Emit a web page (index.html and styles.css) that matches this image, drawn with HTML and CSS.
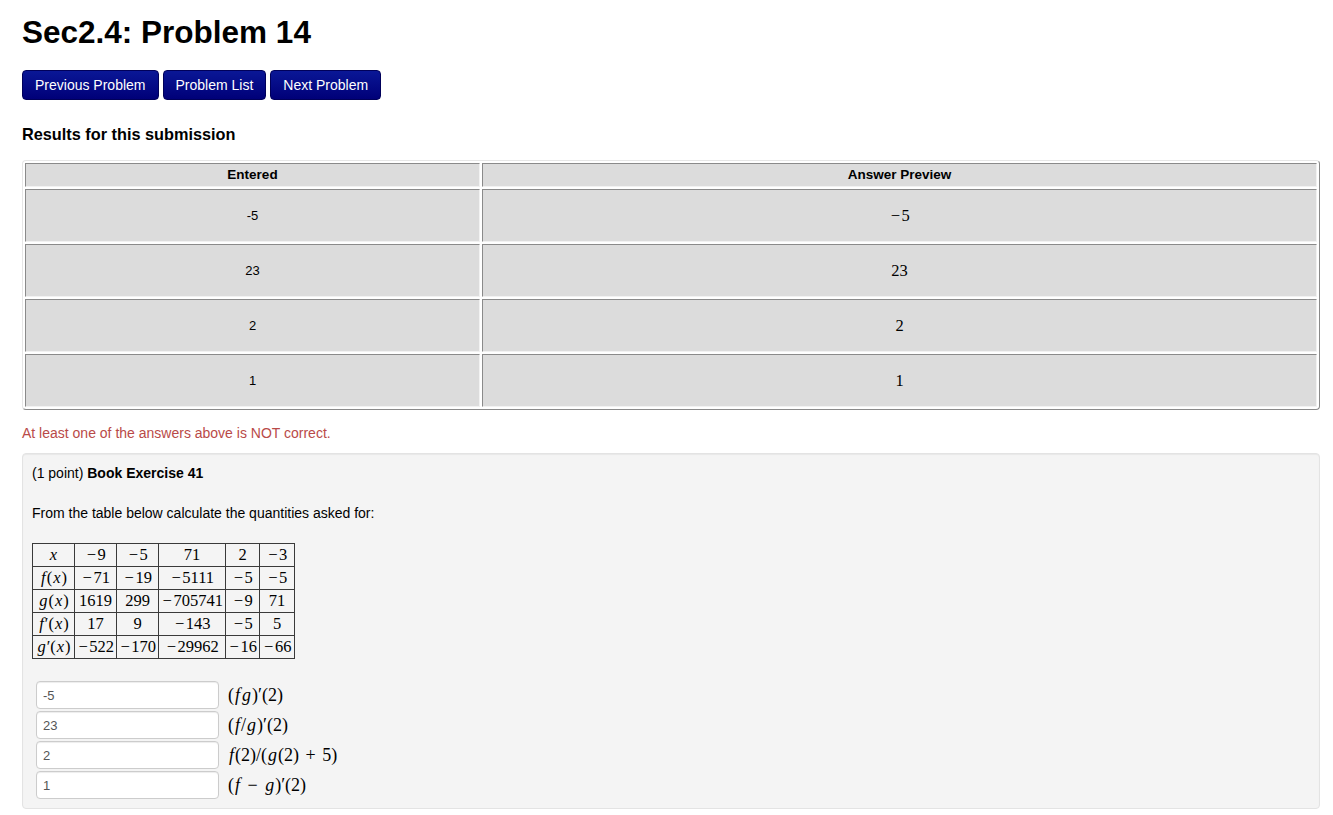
FILE: index.html
```html
<!DOCTYPE html>
<html>
<head>
<meta charset="utf-8">
<title>Sec2.4: Problem 14</title>
<link rel="stylesheet" href="styles.css">
</head>
<body>
<div class="page">
  <h2 class="title">Sec2.4: Problem 14</h2>
  <div class="nav">
    <a class="btn">Previous Problem</a>
    <a class="btn">Problem List</a>
    <a class="btn">Next Problem</a>
  </div>
  <h3 class="results-head">Results for this submission</h3>
  <table class="attempt">
    <colgroup><col class="c1"><col></colgroup>
    <tr class="hdr"><th>Entered</th><th>Answer Preview</th></tr>
    <tr><td>-5</td><td class="math"><span class="mn">−</span>5</td></tr>
    <tr><td>23</td><td class="math">23</td></tr>
    <tr><td>2</td><td class="math">2</td></tr>
    <tr><td>1</td><td class="math">1</td></tr>
  </table>
  <div class="msg">At least one of the answers above is NOT correct.</div>
  <div class="well">
    <p class="line">(1 point) <b>Book Exercise 41</b></p>
    <p class="line spaced">From the table below calculate the quantities asked for:</p>
    <table class="data">
      <colgroup><col class="d1"><col class="d2"><col class="d3"><col class="d4"><col class="d5"><col class="d6"></colgroup>
      <tr><td><i class="v">x</i></td><td><span class="mn">−</span>9</td><td><span class="mn">−</span>5</td><td>71</td><td>2</td><td><span class="mn">−</span>3</td></tr>
      <tr><td><i class="v">f</i>(<i class="v">x</i>)</td><td><span class="mn">−</span>71</td><td><span class="mn">−</span>19</td><td><span class="mn">−</span>5111</td><td><span class="mn">−</span>5</td><td><span class="mn">−</span>5</td></tr>
      <tr><td><i class="v">g</i>(<i class="v">x</i>)</td><td>1619</td><td>299</td><td><span class="mn">−</span>705741</td><td><span class="mn">−</span>9</td><td>71</td></tr>
      <tr><td><i class="v">f</i>′(<i class="v">x</i>)</td><td>17</td><td>9</td><td><span class="mn">−</span>143</td><td><span class="mn">−</span>5</td><td>5</td></tr>
      <tr><td><i class="v">g</i>′(<i class="v">x</i>)</td><td><span class="mn">−</span>522</td><td><span class="mn">−</span>170</td><td><span class="mn">−</span>29962</td><td><span class="mn">−</span>16</td><td><span class="mn">−</span>66</td></tr>
    </table>
    <div class="answers">
      <div class="arow"><input class="ans" type="text" value="-5"><span class="lbl">(<i class="v">f</i><i class="v">g</i>)′(2)</span></div>
      <div class="arow"><input class="ans" type="text" value="23"><span class="lbl">(<i class="v">f</i>/<i class="v">g</i>)′(2)</span></div>
      <div class="arow"><input class="ans" type="text" value="2"><span class="lbl"><i class="v">f</i>(2)/(<i class="v">g</i>(2) <span class="op">+</span> 5)</span></div>
      <div class="arow"><input class="ans" type="text" value="1"><span class="lbl">(<i class="v">f</i> <span class="op">−</span> <i class="v">g</i>)′(2)</span></div>
    </div>
  </div>
</div>
</body>
</html>
```

FILE: styles.css
```css
html, body {
  margin: 0;
  padding: 0;
  background: #ffffff;
}
body {
  font-family: "Liberation Sans", Arial, sans-serif;
  font-size: 14px;
  line-height: 20px;
  color: #000;
}
.page {
  padding: 12px 13px 0 22px;
}
.title {
  margin: 0;
  font-size: 31.5px;
  line-height: 40px;
  font-weight: bold;
}
.nav {
  margin-top: 18px;
  display: flex;
  gap: 4px;
}
.btn {
  display: block;
  height: 30px;
  box-sizing: border-box;
  padding: 0 12px;
  line-height: 28px;
  font-size: 14px;
  color: #fff;
  background: linear-gradient(#0a1796, #000078);
  border: 1px solid #00005a;
  border-radius: 4px;
}
.results-head {
  margin: 24px 0 0 0;
  font-size: 16.3px;
  line-height: 20px;
  font-weight: bold;
}
.attempt {
  margin-top: 16px;
  width: 100%;
  border-collapse: separate;
  border-spacing: 2px;
  border: 1px solid;
  border-color: #e6e6e6 #8a8a8a #8a8a8a #e6e6e6;
  border-radius: 4px;
  font-size: 13px;
}
.attempt .c1 { width: 455px; }
.attempt th, .attempt td {
  background: #dcdcdc;
  border: 1px solid;
  border-color: #8a8a8a #f2f2f2 #f2f2f2 #8a8a8a;
  text-align: center;
  padding: 0;
}
.attempt th {
  height: 22px;
  font-size: 13.5px;
  font-weight: bold;
}
.attempt td {
  height: 51px;
}
.attempt td.math {
  font-family: "Liberation Serif", "Times New Roman", serif;
  font-size: 16.5px;
}
.mn {
  display: inline-block;
  padding: 0 1.5px;
}
.v {
  font-style: italic;
  padding: 0 1px;
}
.op {
  padding: 0 2px;
}
.msg {
  margin-top: 13px;
  color: #b94a48;
  font-size: 14px;
  line-height: 20px;
}
.well {
  margin-top: 10px;
  background: #f4f4f4;
  border: 1px solid #e3e3e3;
  border-radius: 4px;
  box-shadow: inset 0 1px 1px rgba(0,0,0,0.05);
  padding: 9px 9px 9px 9px;
}
.line {
  margin: 0;
  font-size: 14px;
  line-height: 20px;
}
.line.spaced {
  margin-top: 20px;
}
.data {
  margin-top: 20px;
  border-collapse: collapse;
  table-layout: fixed;
  width: 262px;
  font-family: "Liberation Serif", "Times New Roman", serif;
  font-size: 16.5px;
  background: #f4f4f4;
}
.data td {
  border: 1px solid #3a3a3a;
  text-align: center;
  padding: 0;
  height: 22px;
  line-height: 20px;
  white-space: nowrap;
  overflow: hidden;
}
.data .d1 { width: 42px; }
.data .d2 { width: 42px; }
.data .d3 { width: 42px; }
.data .d4 { width: 67px; }
.data .d5 { width: 34px; }
.data .d6 { width: 35px; }
.answers {
  margin-top: 22px;
  padding-left: 4px;
  display: flex;
  flex-direction: column;
  gap: 2px;
}
.arow {
  display: flex;
  align-items: center;
  gap: 9px;
}
.ans {
  width: 183px;
  height: 28px;
  box-sizing: border-box;
  margin: 0;
  padding: 0 6px;
  border: 1px solid #cccccc;
  border-radius: 4px;
  background: #fff;
  font-family: "Liberation Sans", Arial, sans-serif;
  font-size: 13px;
  color: #555;
  box-shadow: inset 0 1px 1px rgba(0,0,0,0.075);
}
.lbl {
  font-family: "Liberation Serif", "Times New Roman", serif;
  font-size: 18px;
}
```
